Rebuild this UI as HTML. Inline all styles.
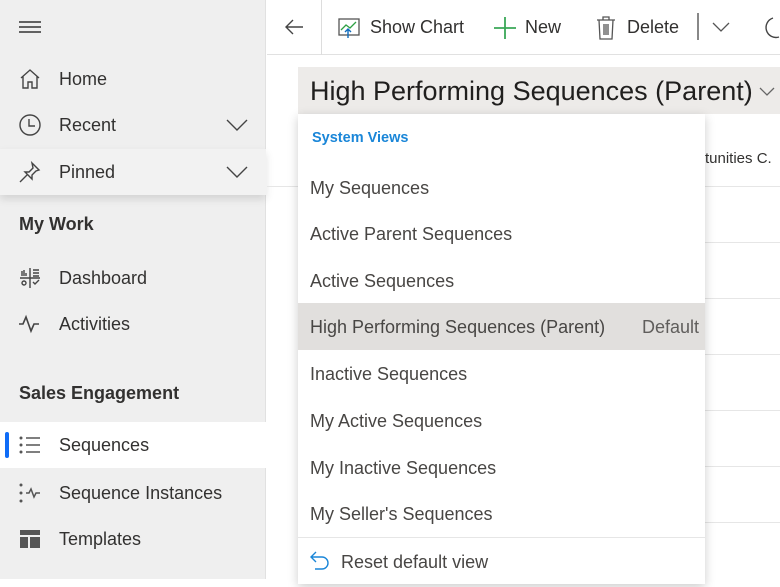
<!DOCTYPE html>
<html><head><meta charset="utf-8"><style>
*{margin:0;padding:0;box-sizing:border-box}
body{width:780px;height:579px;overflow:hidden;background:#fff;font-family:"Segoe UI","Liberation Sans",sans-serif;color:#323130;position:relative}
.side{position:absolute;left:0;top:0;width:266px;height:579px;background:#efefef;border-right:1px solid #e1e1e1}
.it{position:absolute;left:0;width:266px;height:46px;font-size:18px;line-height:46px;padding-left:59px;color:#323130}
.it svg.ic{position:absolute;left:19px;top:12px}
.it svg.chev{position:absolute;left:226px;top:16px}
.hd{position:absolute;left:19px;font-size:18px;font-weight:bold;color:#323130}
.top{position:absolute;left:267px;top:0;right:0;height:55px;border-bottom:1px solid #e1e1e1;font-size:18px}
.top span{position:absolute;top:17px}
.title{position:absolute;left:298px;top:67px;width:482px;height:47px;background:#edebe9;font-size:27px;line-height:49px;padding-left:12px;color:#201f1e}
.rl{position:absolute;left:705px;width:75px;height:1px;background:#e6e6e6}
.menu{position:absolute;left:298px;top:114px;width:407px;height:470px;background:#fff;box-shadow:0 3px 10px rgba(0,0,0,.2)}
.mi{position:absolute;left:0;width:407px;height:47px;line-height:49px;padding-left:12px;font-size:18px;color:#484644}
</style></head><body>
<div class="side">
<svg style="position:absolute;left:19px;top:21px" width="22" height="12"><path d="M0 1h22M0 6h22M0 11h22" stroke="#333" stroke-width="1.5"/></svg>
<div class="it" style="top:56px"><svg class="ic" width="22" height="22" viewBox="0 0 22 22" fill="none" stroke="#444" stroke-width="1.4"><path d="M2 10L11 2l9 8M4 8v12h5v-6h4v6h5V8"/></svg>Home</div>
<div class="it" style="top:102px"><svg class="ic" width="24" height="24" viewBox="0 0 24 24" fill="none" stroke="#444" stroke-width="1.4"><circle cx="11" cy="11" r="10"/><path d="M10 5v7h6"/></svg>Recent<svg class="chev" width="22" height="14"><path d="M1 2l10 10 10-10" fill="none" stroke="#444" stroke-width="1.4"/></svg></div>
<div class="it" style="top:149px;background:#f2f2f2;box-shadow:0 4px 8px rgba(0,0,0,.12)"><svg class="ic" width="22" height="22" viewBox="0 0 22 22" fill="none" stroke="#444" stroke-width="1.4"><path d="M13 2l7 7-3 1-4 4 0 4-7-7 4 0 4-4zM8 14l-7 7"/></svg>Pinned<svg class="chev" width="22" height="14"><path d="M1 2l10 10 10-10" fill="none" stroke="#444" stroke-width="1.4"/></svg></div>
<div class="hd" style="top:214px">My Work</div>
<div class="it" style="top:255px"><svg class="ic" width="22" height="22" viewBox="0 0 22 22" fill="none" stroke="#444" stroke-width="1.4"><path d="M11 1v20M1 11h20M3 4v5M5 3v6M7 6v3M14 3h6M14 6h6M14 9h6M14 15l2 2 4-4"/><circle cx="5" cy="16" r="2"/></svg>Dashboard</div>
<div class="it" style="top:301px"><svg class="ic" width="22" height="22" viewBox="0 0 22 22" fill="none" stroke="#444" stroke-width="1.6"><path d="M0 11h4l3-7 5 14 3-7h5"/></svg>Activities</div>
<div class="hd" style="top:383px">Sales Engagement</div>
<div class="it" style="top:422px;background:#fff"><div style="position:absolute;left:5px;top:10px;width:4px;height:26px;border-radius:2px;background:#0f6cf7"></div><svg class="ic" width="22" height="22" viewBox="0 0 22 22" fill="#555" stroke="#555" stroke-width="1.6"><circle cx="2" cy="4" r="1.5" stroke="none"/><circle cx="2" cy="11" r="1.5" stroke="none"/><circle cx="2" cy="18" r="1.5" stroke="none"/><path d="M7 4h14M7 11h14M7 18h14"/></svg>Sequences</div>
<div class="it" style="top:470px"><svg class="ic" width="22" height="22" viewBox="0 0 22 22" fill="#555" stroke="#555" stroke-width="1.5"><circle cx="2" cy="3" r="1.5" stroke="none"/><circle cx="2" cy="11" r="1.5" stroke="none"/><circle cx="2" cy="19" r="1.5" stroke="none"/><path d="M7 11h3l2-4 3 8 2-4h4" fill="none"/></svg>Sequence Instances</div>
<div class="it" style="top:516px"><svg class="ic" width="22" height="22" viewBox="0 0 22 22" fill="#555"><rect x="1" y="2" width="20" height="5"/><rect x="1" y="9" width="8" height="11"/><rect x="11" y="9" width="10" height="11"/></svg>Templates</div>
</div>
<div class="top">
<svg style="position:absolute;left:17px;top:18px" width="20" height="18"><path d="M19 9H2M9 2L2 9l7 7" fill="none" stroke="#444" stroke-width="1.4"/></svg>
<div style="position:absolute;left:54px;top:0;width:1px;height:55px;background:#ddd"></div>
<svg style="position:absolute;left:71px;top:17px" width="22" height="22" viewBox="0 0 22 22" fill="none"><rect x="1" y="2" width="20" height="16" stroke="#555" stroke-width="1.3"/><path d="M3 13l5-5 4 3 6-6" stroke="#2ea043" stroke-width="1.3"/><path d="M10 21v-9M7 15l3-3 3 3" stroke="#0f6cbd" stroke-width="1.4"/></svg>
<span style="left:103px">Show Chart</span>
<svg style="position:absolute;left:227px;top:17px" width="22" height="22"><path d="M11 0v22M0 11h22" stroke="#3aa757" stroke-width="1.8"/></svg>
<span style="left:258px">New</span>
<svg style="position:absolute;left:329px;top:16px" width="20" height="24" viewBox="0 0 20 24" fill="none" stroke="#555" stroke-width="1.3"><path d="M1 4h18M7 4V1h6v3M3 4l1 19h12l1-19M8 8v11M10 8v11M12 8v11"/></svg>
<span style="left:360px">Delete</span>
<div style="position:absolute;left:430px;top:13px;width:2px;height:27px;background:#888"></div>
<svg style="position:absolute;left:445px;top:22px" width="18" height="10"><path d="M1 1l8 8 8-8" fill="none" stroke="#555" stroke-width="1.3"/></svg>
<svg style="position:absolute;left:496px;top:15px" width="20" height="24"><path d="M10 3A9 9 0 1 0 16 22" fill="none" stroke="#444" stroke-width="1.4"/></svg>
</div>
<div class="title">High Performing Sequences (Parent)<svg style="position:absolute;left:461px;top:20px" width="16" height="10"><path d="M1 1l7 7 7-7" fill="none" stroke="#666" stroke-width="1.3"/></svg></div>
<div style="position:absolute;left:267px;top:186px;width:513px;height:1px;background:#e6e6e6"></div>
<div style="position:absolute;left:700px;top:150px;font-size:15px;color:#323130;white-space:nowrap">rtunities C.</div>
<div class="rl" style="top:242px"></div><div class="rl" style="top:298px"></div><div class="rl" style="top:354px"></div><div class="rl" style="top:410px"></div><div class="rl" style="top:466px"></div><div class="rl" style="top:522px"></div>
<div class="menu">
<div style="position:absolute;left:14px;top:16px;font-size:14.5px;font-weight:bold;color:#1a86d8">System Views</div>
<div class="mi" style="top:50px">My Sequences</div>
<div class="mi" style="top:96px">Active Parent Sequences</div>
<div class="mi" style="top:143px">Active Sequences</div>
<div class="mi" style="top:189px;background:#e1dfdd">High Performing Sequences (Parent)<span style="position:absolute;right:6px;color:#605e5c">Default</span></div>
<div class="mi" style="top:236px">Inactive Sequences</div>
<div class="mi" style="top:283px">My Active Sequences</div>
<div class="mi" style="top:330px">My Inactive Sequences</div>
<div class="mi" style="top:376px">My Seller's Sequences</div>
<div style="position:absolute;left:0;top:423px;width:407px;height:1px;background:#e6e6e6"></div>
<div class="mi" style="top:424px;padding-left:43px">Reset default view<svg style="position:absolute;left:12px;top:13px" width="20" height="22"><path d="M6 1L1 6l5 5M1 6h11a6 6 0 0 1 0 12H5" fill="none" stroke="#1a86d8" stroke-width="1.4"/></svg></div>
</div>
</body></html>
